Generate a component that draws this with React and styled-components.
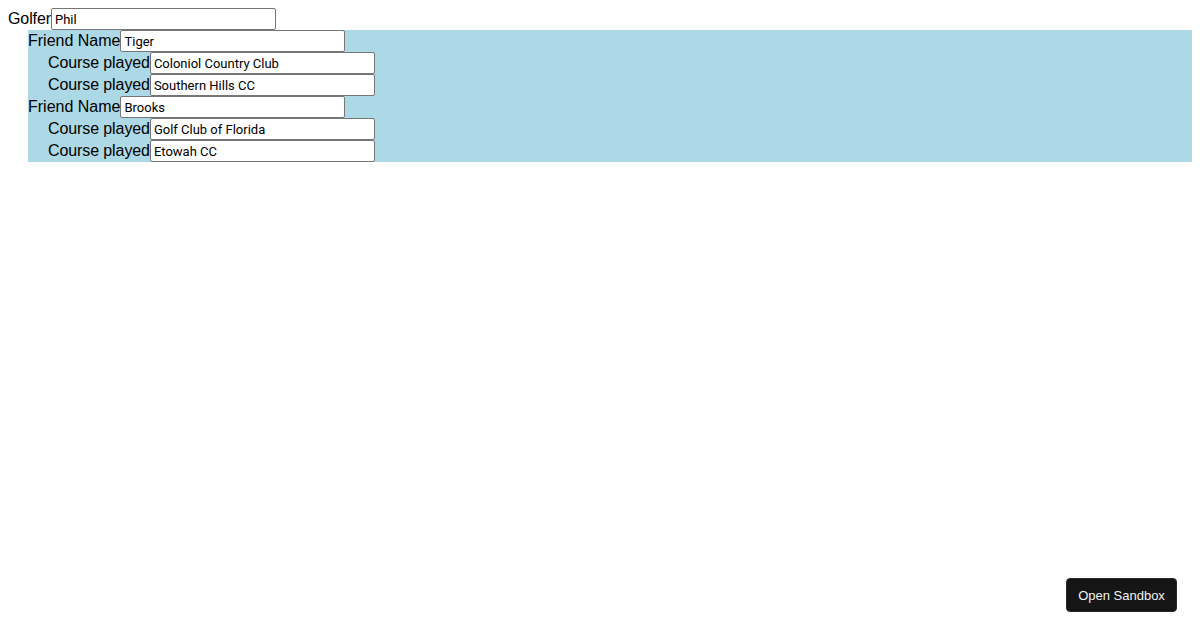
import React from 'react';
import styled, { createGlobalStyle } from 'styled-components';

const GlobalStyle = createGlobalStyle`
  body {
    margin: 8px;
    font-family: "Liberation Sans", Arial, sans-serif;
    font-size: 16px;
    background: #ffffff;
    color: #000000;
  }
`;

const Row = styled.div`
  padding-left: ${props => props.indent || 0}px;
  white-space: nowrap;
`;

const Label = styled.label`
  font-size: 16px;
  letter-spacing: ${props => (props.tight ? '-0.1px' : '0')};
`;

const TextInput = styled.input`
  font-family: Roboto, "Liberation Sans", Arial, sans-serif;
  font-size: 13px;
  width: 225px;
  height: 22px;
  box-sizing: border-box;
  padding: 1px 3px 0;
  border: 1px solid #767676;
  border-radius: 2px;
  background: #ffffff;
  color: #000000;
  margin: 0;
  vertical-align: baseline;
`;

const Friends = styled.div`
  margin-left: 20px;
  background-color: lightblue;
`;

const SandboxButton = styled.button`
  position: fixed;
  right: 23px;
  bottom: 18px;
  height: 34px;
  width: 111px;
  padding: 0;
  background: #151515;
  color: #f2f2f2;
  border: 1px solid #2a2a2a;
  border-radius: 4px;
  font-family: "Liberation Sans", Arial, sans-serif;
  font-size: 13px;
  cursor: pointer;
`;

const friends = [
  { name: 'Tiger', courses: ['Coloniol Country Club', 'Southern Hills CC'] },
  { name: 'Brooks', courses: ['Golf Club of Florida', 'Etowah CC'] },
];

export default function App() {
  return (
    <>
      <GlobalStyle />
      <Row>
        <Label tight>Golfer</Label>
        <TextInput defaultValue="Phil" />
      </Row>
      <Friends>
        {friends.map(friend => (
          <React.Fragment key={friend.name}>
            <Row>
              <Label>Friend Name</Label>
              <TextInput defaultValue={friend.name} />
            </Row>
            {friend.courses.map(course => (
              <Row indent={20} key={course}>
                <Label tight>Course played</Label>
                <TextInput defaultValue={course} />
              </Row>
            ))}
          </React.Fragment>
        ))}
      </Friends>
      <SandboxButton>Open Sandbox</SandboxButton>
    </>
  );
}
